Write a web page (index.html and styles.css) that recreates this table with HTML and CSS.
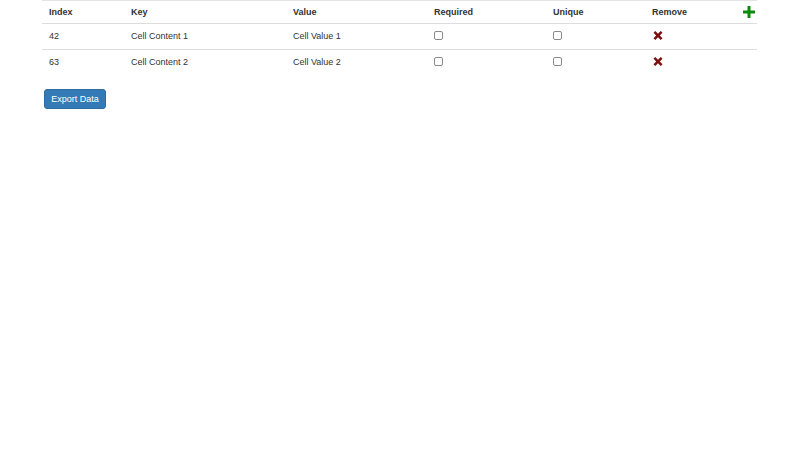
FILE: index.html
```html
<!DOCTYPE html>
<html>
<head>
<meta charset="utf-8">
<link rel="stylesheet" href="styles.css">
</head>
<body>
<div class="wrap">
  <table class="grid">
    <colgroup>
      <col class="c-index"><col class="c-key"><col class="c-value"><col class="c-req"><col class="c-uni"><col class="c-rem"><col class="c-add">
    </colgroup>
    <thead>
      <tr>
        <th>Index</th><th>Key</th><th>Value</th><th>Required</th><th>Unique</th><th>Remove</th>
        <th class="add"><svg class="plus" viewBox="0 0 12 12" width="12" height="12"><path d="M4.5 0h3v4.5H12v3H7.5V12h-3V7.5H0v-3h4.5z" fill="#0b8a0b"/></svg></th>
      </tr>
    </thead>
    <tbody>
      <tr>
        <td>42</td><td>Cell Content 1</td><td>Cell Value 1</td>
        <td><span class="cb"></span></td><td><span class="cb"></span></td>
        <td><svg class="x" viewBox="0 0 10 10" width="10" height="9"><path d="M0 2L2 0L5 3L8 0L10 2L7 5L10 8L8 10L5 7L2 10L0 8L3 5Z" fill="#7d0f0f"/></svg></td>
        <td></td>
      </tr>
      <tr>
        <td>63</td><td>Cell Content 2</td><td>Cell Value 2</td>
        <td><span class="cb"></span></td><td><span class="cb"></span></td>
        <td><svg class="x" viewBox="0 0 10 10" width="10" height="9"><path d="M0 2L2 0L5 3L8 0L10 2L7 5L10 8L8 10L5 7L2 10L0 8L3 5Z" fill="#7d0f0f"/></svg></td>
        <td></td>
      </tr>
    </tbody>
  </table>
  <button class="btn">Export Data</button>
</div>
</body>
</html>
```
FILE: styles.css
```css
html, body {
  margin: 0;
  padding: 0;
  background: #fff;
}
body {
  font-family: "Liberation Sans", Arial, sans-serif;
  font-size: 9px;
  color: #333;
}
.wrap {
  padding: 0 43px 0 42px;
}
.grid {
  width: 715px;
  border-collapse: collapse;
  table-layout: fixed;
  border-top: 1px solid #e4e4e4;
}
.c-index { width: 82px; }
.c-key { width: 162px; }
.c-value { width: 141px; }
.c-req { width: 119px; }
.c-uni { width: 99px; }
.c-rem { width: 92px; }
.c-add { width: 20px; }
th, td {
  text-align: left;
  padding: 0 7px;
  vertical-align: middle;
}
th {
  font-weight: bold;
  height: 22px;
  border-bottom: 1px solid #ddd;
}
td {
  height: 23px;
  padding-bottom: 2px;
  border-bottom: 1px solid #ddd;
}
tbody tr:last-child td {
  border-bottom: 0;
}
th.add {
  padding: 0;
  text-align: right;
}
.plus {
  display: block;
  margin-left: auto;
  margin-right: 2px;
}
.cb {
  display: block;
  width: 7px;
  height: 7px;
  border: 1px solid #8a8a8a;
  border-radius: 2px;
  background: #fff;
}
.x {
  display: block;
  margin-left: 1px;
}
.btn {
  display: block;
  margin: 14px 0 0 2px;
  width: 62px;
  height: 20px;
  padding: 0;
  font-family: "Liberation Sans", Arial, sans-serif;
  font-size: 9px;
  color: #fff;
  background: #337ab7;
  border: 1px solid #2e6da4;
  border-radius: 3px;
}
```
